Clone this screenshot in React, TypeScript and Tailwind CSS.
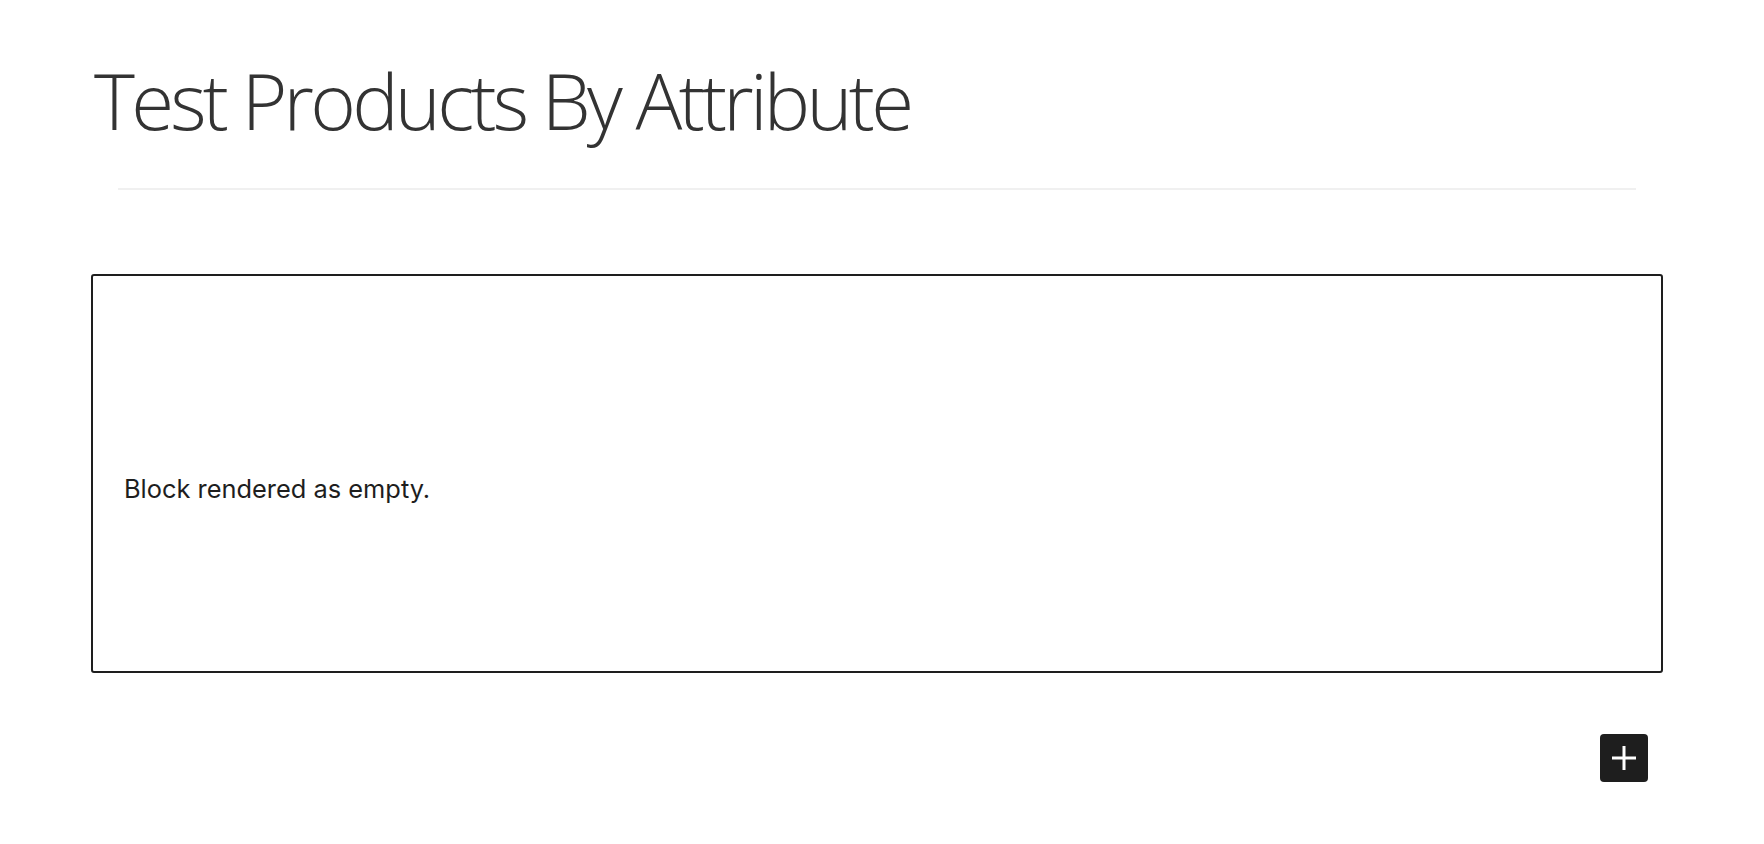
import React from "react";

function PlusIcon() {
  return (
    <svg width="48" height="48" viewBox="0 0 24 24" fill="currentColor">
      <path d="M11.25 12.75V18h1.5v-5.25H18v-1.5h-5.25V6h-1.5v5.25H6v1.5h5.25z" />
    </svg>
  );
}

export default function App() {
  return (
    <div className="min-h-screen bg-white pl-[91px] pr-[101px]">
      <h1
        className="pt-[61px] pl-[3px] text-[78px] leading-none font-light tracking-[-3.75px] text-[#333] [font-stretch:92%]"
        style={{ fontFamily: '"Open Sans", sans-serif' }}
      >
        Test Products By Attribute
      </h1>

      <div className="mx-[27px] mt-[49px] h-[2px] bg-[#f0f0f0]" />

      {/* empty block placeholder */}
      <div className="mt-[84px] h-[399px] rounded-[3px] border-2 border-[#1e1e1e] pl-[31px] pt-[200px]">
        <p
          className="text-[25.4px] leading-[25px] text-[#1e1e1e]"
          style={{ fontFamily: "Inter, sans-serif" }}
        >
          Block rendered as empty.
        </p>
      </div>

      <div className="mt-[61px] mr-[15px] flex justify-end">
        <button className="flex h-12 w-12 items-center justify-center rounded-[4px] bg-[#1e1e1e] text-white">
          <PlusIcon />
        </button>
      </div>
    </div>
  );
}
